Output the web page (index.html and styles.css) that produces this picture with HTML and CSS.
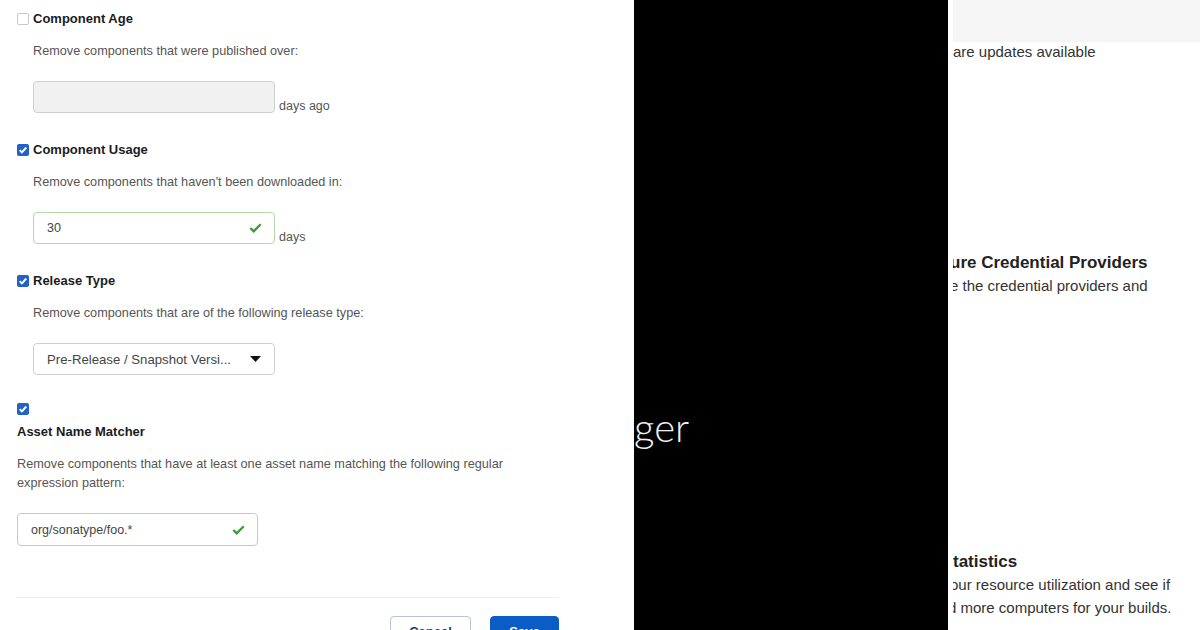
FILE: index.html
```html
<!DOCTYPE html>
<html lang="en">

<head>
    <meta charset="UTF-8">
    <meta name="viewport" content="width=device-width, initial-scale=1.0">
    <title>Cleanup Policy</title>
    <link rel="stylesheet" href="styles.css">
</head>

<body>
    <div class="page">
        <!-- 表单 -->
        <div class="form-panel">
            <div class="option">
                <div class="opt-head">
                    <span class="box"></span>
                    <span class="opt-title">Component Age</span>
                </div>
                <div class="opt-body">
                    <p class="desc">Remove components that were published over:</p>
                    <div class="field-row">
                        <div class="field disabled"></div>
                        <span class="unit">days ago</span>
                    </div>
                </div>
            </div>

            <div class="option">
                <div class="opt-head">
                    <svg class="box-on" width="12" height="12" viewBox="0 0 12 12"><rect width="12" height="12" rx="2" fill="#2262c6"/><path d="M2.7 6.1l2.2 2.2 4.4-4.8" fill="none" stroke="#fff" stroke-width="1.9"/></svg>
                    <span class="opt-title">Component Usage</span>
                </div>
                <div class="opt-body">
                    <p class="desc">Remove components that haven't been downloaded in:</p>
                    <div class="field-row">
                        <div class="field valid">
                            <span>30</span>
                            <svg width="13" height="10" viewBox="0 0 13 10"><path d="M1.3 5l3.4 3.3 7-7" fill="none" stroke="#3b9a35" stroke-width="2.3"/></svg>
                        </div>
                        <span class="unit">days</span>
                    </div>
                </div>
            </div>

            <div class="option">
                <div class="opt-head">
                    <svg class="box-on" width="12" height="12" viewBox="0 0 12 12"><rect width="12" height="12" rx="2" fill="#2262c6"/><path d="M2.7 6.1l2.2 2.2 4.4-4.8" fill="none" stroke="#fff" stroke-width="1.9"/></svg>
                    <span class="opt-title">Release Type</span>
                </div>
                <div class="opt-body">
                    <p class="desc">Remove components that are of the following release type:</p>
                    <div class="field-row">
                        <div class="field select">
                            <span>Pre-Release / Snapshot Versi...</span>
                            <svg width="11" height="6" viewBox="0 0 11 6"><path d="M0 0h11L5.5 6z" fill="#111"/></svg>
                        </div>
                    </div>
                </div>
            </div>

            <div class="option matcher">
                <svg class="box-on" width="12" height="12" viewBox="0 0 12 12"><rect width="12" height="12" rx="2" fill="#2262c6"/><path d="M2.7 6.1l2.2 2.2 4.4-4.8" fill="none" stroke="#fff" stroke-width="1.9"/></svg>
                <div class="opt-title">Asset Name Matcher</div>
                <p class="desc wide">Remove components that have at least one asset name matching the following regular expression pattern:</p>
                <div class="field valid short">
                    <span>org/sonatype/foo.*</span>
                    <svg width="13" height="10" viewBox="0 0 13 10"><path d="M1.3 5l3.4 3.3 7-7" fill="none" stroke="#3b9a35" stroke-width="2.3"/></svg>
                </div>
            </div>

            <div class="footer">
                <button class="btn cancel">Cancel</button>
                <button class="btn save">Save</button>
            </div>
        </div>

        <!-- 黑色标题 -->
        <div class="brand-panel">
            <div class="brand"><span class="tail"><span class="head">Nexus Repository Mana</span>ger</span></div>
        </div>

        <!-- 右侧介绍 -->
        <div class="info-panel">
            <div class="info-body">
                <div class="grey-bar"></div>
                <p class="line first"><span class="tail"><span class="head">Check if there </span>are updates available</span></p>

                <div class="block credentials">
                    <p class="line title"><span class="tail cut-3"><span class="head">Config</span>ure Credential Providers</span></p>
                    <p class="line"><span class="tail cut-3"><span class="head">Configur</span>e the credential providers and</span></p>
                </div>

                <div class="block stats">
                    <p class="line title"><span class="tail"><span class="head">Build S</span>tatistics</span></p>
                    <p class="line"><span class="tail cut-3"><span class="head">Monitor y</span>our resource utilization and see if</span></p>
                    <p class="line"><span class="tail cut-5"><span class="head">you need to ad</span>d more computers for your builds.</span></p>
                </div>
            </div>
        </div>
    </div>
</body>

</html>
```

FILE: styles.css
```css
* {
    margin: 0;
    padding: 0;
    box-sizing: border-box;
}

body {
    font-family: "Liberation Sans", Arial, sans-serif;
    background: #fff;
}

.page {
    display: flex;
    width: 1200px;
    height: 630px;
    overflow: hidden;
}

/* 表单 */
.form-panel {
    width: 634px;
    flex-shrink: 0;
    padding: 12px 75px 0 17px;
    background: #fff;
    color: #222;
}

.option {
    margin-bottom: 30px;
}

.opt-head {
    display: flex;
    align-items: center;
    gap: 4px;
    height: 14px;
}

.box {
    width: 12px;
    height: 12px;
    border: 1px solid #c8c8c8;
    border-radius: 2px;
    background: #fff;
}

.box-on {
    display: block;
}

.opt-title {
    font-size: 13px;
    font-weight: bold;
    line-height: 14px;
    color: #1c1c1c;
}

.opt-body {
    padding-left: 16px;
}

.desc {
    margin-top: 18px;
    font-size: 12.7px;
    line-height: 14px;
    color: #555;
}

.field-row {
    display: flex;
    align-items: flex-end;
    gap: 4px;
    margin-top: 23px;
}

.field {
    display: flex;
    align-items: center;
    justify-content: space-between;
    width: 242px;
    height: 32px;
    padding: 0 12px 0 13px;
    border: 1px solid #cfcfcf;
    border-radius: 4px;
    font-size: 12.5px;
    color: #444;
    background: #fff;
}

.field.disabled {
    background: #f1f1f1;
}

.field.valid {
    border-color: #b3d8a7;
}

.field.select {
    padding-right: 13px;
    font-size: 13.2px;
}

.unit {
    font-size: 12.5px;
    line-height: 14px;
    color: #555;
}

.matcher {
    margin-top: -2px;
    margin-bottom: 0;
}

.matcher .opt-title {
    display: block;
    margin-top: 10px;
}

.desc.wide {
    margin-top: 16px;
    width: 510px;
    line-height: 19px;
}

.field.short {
    width: 241px;
    height: 33px;
    margin-top: 20px;
}

.footer {
    display: flex;
    justify-content: flex-end;
    gap: 19px;
    margin-top: 51px;
    padding-top: 18px;
    border-top: 1px solid #efefef;
    margin-left: -1px;
}

.btn {
    height: 32px;
    border-radius: 4px;
    font-family: "Liberation Sans", Arial, sans-serif;
    font-size: 13px;
    font-weight: bold;
    padding-bottom: 2px;
}

.btn.cancel {
    width: 81px;
    border: 1px solid #b7c3d2;
    background: #fff;
    color: #1c3d66;
}

.btn.save {
    width: 69px;
    border: 1px solid #0b5cc5;
    background: #0b5cc5;
    color: #fff;
}

/* 被裁剪的文字 */
.tail {
    position: relative;
    white-space: nowrap;
}

.head {
    position: absolute;
    right: 100%;
    top: 0;
}

.tail.cut-3 {
    margin-left: -3px;
}

.tail.cut-5 {
    margin-left: -5px;
}

/* 黑色标题 */
.brand-panel {
    width: 314px;
    flex-shrink: 0;
    background: #000;
    overflow: hidden;
    padding-top: 403px;
}

.brand {
    font-family: Lato, "Liberation Sans", sans-serif;
    font-weight: 300;
    font-size: 40px;
    line-height: 48px;
    color: #f2f2f2;
}

/* 右侧介绍 */
.info-panel {
    flex: 1;
    padding-left: 5px;
    color: #333;
    font-size: 15px;
}

.info-body {
    height: 100%;
    overflow: hidden;
}

.grey-bar {
    height: 42px;
    background: #f5f5f5;
}

.line {
    line-height: 23px;
    white-space: nowrap;
}

.line.first {
    margin-top: -2px;
}

.line.title {
    font-size: 17px;
    font-weight: bold;
    color: #222;
}

.credentials {
    margin-top: 188px;
}

.stats {
    margin-top: 253px;
}
```
